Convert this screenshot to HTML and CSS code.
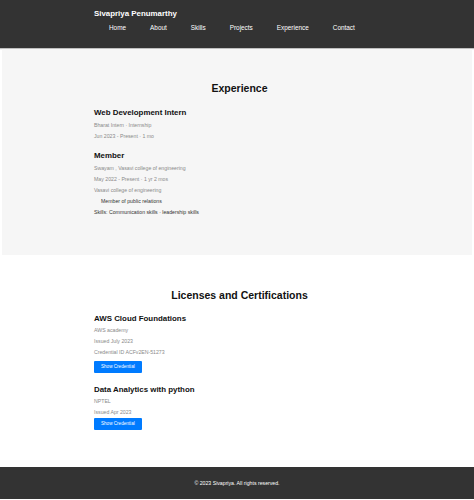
FILE: index.html
```html
<!DOCTYPE html>
<html lang="en">

<head>
    <meta charset="UTF-8">
    <meta name="viewport" content="width=device-width, initial-scale=1.0">
    <title>Sivapriya Penumarthy - Experience</title>
    <link rel="stylesheet" href="styles.css">
</head>

<body>

    <header>
        <div class="container">
            <div class="site-title">Sivapriya Penumarthy</div>
            <nav>
                <a href="#home">Home</a>
                <a href="#about">About</a>
                <a href="#skills">Skills</a>
                <a href="#projects">Projects</a>
                <a href="#experience">Experience</a>
                <a href="#contact">Contact</a>
            </nav>
        </div>
    </header>

    <section id="experience" class="experience">
        <div class="container">
            <h2>Experience</h2>

            <div class="item">
                <h3>Web Development Intern</h3>
                <p class="muted">Bharat Intern · Internship</p>
                <p class="muted">Jun 2023 - Present · 1 mo</p>
            </div>

            <div class="item">
                <h3>Member</h3>
                <p class="muted">Swayam , Vasavi college of engineering</p>
                <p class="muted">May 2022 - Present · 1 yr 2 mos</p>
                <p class="muted">Vasavi college of engineering</p>
                <p class="indent">Member of public relations</p>
                <p>Skills: Communication skills · leadership skills</p>
            </div>
        </div>
    </section>

    <section id="licenses" class="licenses">
        <div class="container">
            <h2>Licenses and Certifications</h2>

            <div class="item">
                <h3>AWS Cloud Foundations</h3>
                <p class="muted">AWS academy</p>
                <p class="muted">Issued July 2023</p>
                <p class="muted">Credential ID ACFv2EN-51273</p>
                <a class="btn btn-spaced" href="#">Show Credential</a>
            </div>

            <div class="item">
                <h3>Data Analytics with python</h3>
                <p class="muted">NPTEL</p>
                <p class="muted">Issued Apr 2023</p>
                <a class="btn" href="#">Show Credential</a>
            </div>
        </div>
    </section>

    <footer>
        <p>&copy; 2023 Sivapriya. All rights reserved.</p>
    </footer>

</body>

</html>
```

FILE: styles.css
```css
body {
    font-family: "Liberation Sans", Arial, sans-serif;
    margin: 0;
    padding: 0;
    background-color: #fff;
    color: #333;
}

.container {
    width: 291px;
    margin-left: 94px;
}

header {
    background-color: #333;
    color: #fff;
    padding: 9px 0 16px;
    box-shadow: 0 1px 1px rgba(0, 0, 0, 0.25);
}

.site-title {
    font-size: 7.9px;
    font-weight: bold;
    line-height: 10px;
}

nav {
    display: flex;
    gap: 24px;
    margin-top: 5px;
    padding-left: 15px;
    line-height: 8px;
}

nav a {
    color: #fff;
    text-decoration: none;
    font-size: 6.4px;
    white-space: nowrap;
}

section h2 {
    font-size: 10.5px;
    line-height: 14px;
    margin: 0;
    text-align: center;
    color: #111;
}

.experience {
    background-color: #f6f6f6;
    margin: 1px 2px 0;
    padding: 32px 0 37px;
}

/* section has 2px side margin, pull the column back to 94px */
.experience .container {
    margin-left: 92px;
}

.licenses {
    padding: 33px 0 37px;
}

.item {
    margin-top: 13px;
}

.experience .item + .item {
    margin-top: 9px;
}

.licenses .item {
    margin-top: 12px;
}

.item h3 {
    font-size: 7.9px;
    line-height: 10px;
    margin: 0 0 2px;
    color: #111;
}

.licenses .item h3 {
    margin-bottom: 0.5px;
}

.item p {
    font-size: 5.2px;
    line-height: 11px;
    margin: 0;
    color: #333;
}

.item p.muted {
    color: #8a8a8a;
}

.item p.indent {
    padding-left: 7px;
}

.btn {
    display: block;
    width: max-content;
    background-color: #007bff;
    color: #fff;
    text-decoration: none;
    font-size: 4.6px;
    line-height: 12px;
    padding: 0 7px;
    border-radius: 1px;
}

.btn-spaced {
    margin-top: 3.5px;
}

footer {
    background-color: #333;
    color: #fff;
    text-align: center;
    padding: 11px 0;
}

footer p {
    margin: 0;
    font-size: 5.2px;
    line-height: 10px;
}
```
